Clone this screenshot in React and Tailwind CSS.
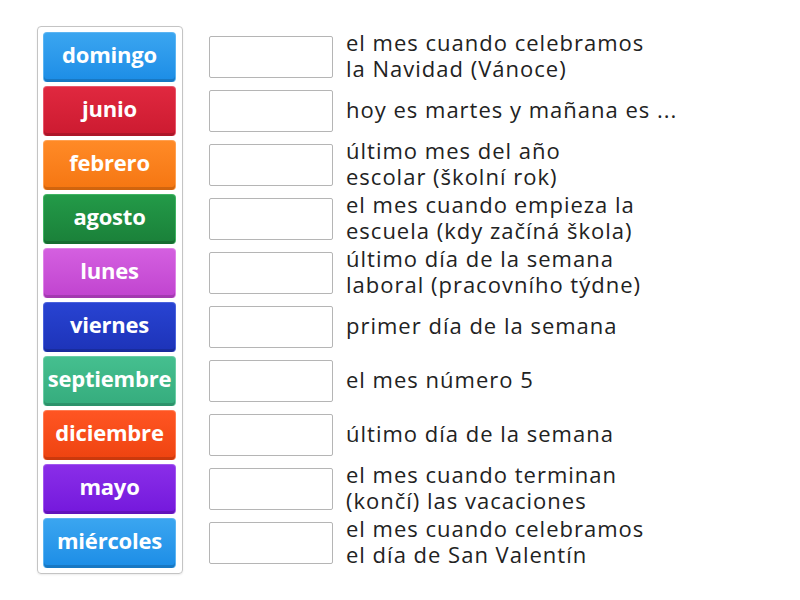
import React from "react";

const WORDS = [
  { name: "domingo", cls: "from-[#3aa5f0] to-[#1b8de6] border-[#5bb5f3]" },
  { name: "junio", cls: "from-[#e0283f] to-[#cc1a30] border-[#e8566a]" },
  { name: "febrero", cls: "from-[#ff8a26] to-[#f57610] border-[#ffa050]" },
  { name: "agosto", cls: "from-[#239a48] to-[#1a8039] border-[#3fb462]" },
  { name: "lunes", cls: "from-[#d45fe0] to-[#c043cf] border-[#df82e8]" },
  { name: "viernes", cls: "from-[#2843d2] to-[#1d33b8] border-[#4a62dc]" },
  { name: "septiembre", cls: "from-[#45bf8f] to-[#35ac7d] border-[#6acda5]" },
  { name: "diciembre", cls: "from-[#ff5522] to-[#ee430f] border-[#ff7a50]" },
  { name: "mayo", cls: "from-[#8a2de8] to-[#7417dc] border-[#a257ee]" },
  { name: "miércoles", cls: "from-[#3aa5f0] to-[#1b8de6] border-[#5bb5f3]" },
];

// lines split as in the worksheet
const CLUES = [
  ["el mes cuando celebramos", "la Navidad (Vánoce)"],
  ["hoy es martes y mañana es ..."],
  ["último mes del año", "escolar (školní rok)"],
  ["el mes cuando empieza la", "escuela (kdy začíná škola)"],
  ["último día de la semana", "laboral (pracovního týdne)"],
  ["primer día de la semana"],
  ["el mes número 5"],
  ["último día de la semana"],
  ["el mes cuando terminan", "(končí) las vacaciones"],
  ["el mes cuando celebramos", "el día de San Valentín"],
];

const App = () => {
  return (
    <div className="w-[800px] h-[600px] bg-white flex pt-[26px] pl-[37px] font-['Open_Sans',sans-serif]">
      <div className="w-[146px] h-[548px] border border-[#c4c4c4] rounded-[4px] p-[5px] flex flex-col gap-1 shadow-[0_1px_2px_rgba(0,0,0,0.08)]">
        {WORDS.map((w, i) => (
          <div
            key={i}
            className={`h-[50px] w-[133px] rounded-[4px] border-t border-x bg-gradient-to-b ${w.cls} shadow-[inset_0_-3px_0_rgba(0,0,0,0.15)] flex items-center justify-center pb-[6px] text-white text-[22px] font-bold tracking-[-0.2px] whitespace-nowrap`}
          >
            {w.name}
          </div>
        ))}
      </div>
      <div className="flex flex-col gap-1 pt-[6px] ml-[26px]">
        {CLUES.map((lines, i) => (
          <div key={i} className="h-[50px] flex items-center">
            <div className="w-[124px] h-[42px] border border-[#b5b5b5] rounded-[2px] shrink-0" />
            <div className="ml-[13px] text-[22px] leading-[26px] tracking-[1px] text-[#222] pb-[5px] whitespace-nowrap">
              {lines.map((l, j) => (
                <div key={j}>{l}</div>
              ))}
            </div>
          </div>
        ))}
      </div>
    </div>
  );
};

export default App;
